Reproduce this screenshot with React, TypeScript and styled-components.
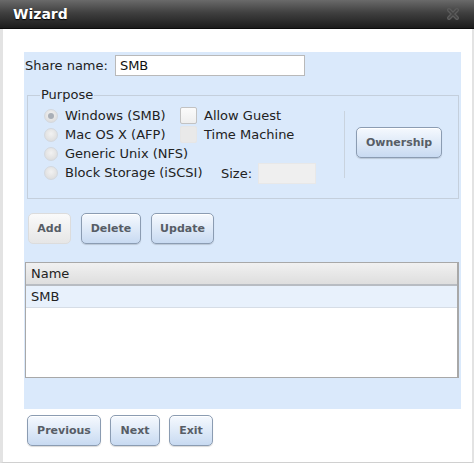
import styled, { createGlobalStyle } from 'styled-components';

const Global = createGlobalStyle`
  html, body {
    margin: 0;
    padding: 0;
    background: #ffffff;
  }
  body {
    font-family: "DejaVu Sans", Verdana, sans-serif;
  }
`;

const Window = styled.div`
  width: 474px;
  height: 463px;
  box-sizing: border-box;
  display: flex;
  flex-direction: column;
  background: #fff;
  overflow: hidden;
`;

const TitleBar = styled.div`
  height: 29px;
  flex: none;
  box-sizing: border-box;
  display: flex;
  align-items: center;
  justify-content: space-between;
  padding: 0 14px 1px 13px;
  background: linear-gradient(#6a6a6a 0%, #404040 45%, #1c1c1c 100%);
  border-bottom: 1px solid #0c0c0c;
`;

const Title = styled.span`
  color: #fff;
  font-weight: bold;
  font-size: 14px;
  text-shadow: 0 1px 1px #000;
`;

const Body = styled.div`
  flex: 1;
  display: flex;
  flex-direction: column;
  padding: 23px 11px 0 21px;
  border-left: 3px solid #e3e3e3;
  border-right: 2px solid #e3e3e3;
  border-bottom: 1px solid #d0d0d0;
`;

const Panel = styled.div`
  background: #dae9fb;
  display: flex;
  flex-direction: column;
  padding: 3px 2px 31px 1px;
`;

const Row = styled.div`
  display: flex;
  align-items: center;
  gap: 7px;
`;

const Label = styled.span`
  font-size: 13px;
  color: #222;
`;

const TextInput = styled.div<{ $width: number; $disabled?: boolean }>`
  width: ${(p) => p.$width}px;
  height: 21px;
  flex: none;
  box-sizing: border-box;
  border: 1px solid ${(p) => (p.$disabled ? '#e8e8e8' : '#b9b9b9')};
  background: ${(p) => (p.$disabled ? '#efefef' : '#fff')};
  font-size: 13px;
  color: #111;
  padding: 2px 4px;
  line-height: 15px;
`;

const Fieldset = styled.fieldset`
  margin: 12px 0 0 2px;
  padding: 0 13px 16px 16px;
  border: 1px solid #c4cfdc;
  display: flex;
  align-items: center;
  min-width: 0;
`;

const Legend = styled.legend`
  font-size: 13px;
  color: #222;
  padding: 0 1px;
  margin-left: -4px;
  line-height: 14px;
`;

const Options = styled.div`
  display: grid;
  grid-template-columns: 136px auto;
  grid-auto-rows: 19px;
  align-items: center;
  margin-top: 4px;
`;

const Option = styled.label`
  display: flex;
  align-items: center;
  gap: 7px;
  font-size: 13px;
  color: #222;
  white-space: nowrap;
`;

const Radio = styled.span<{ $checked?: boolean }>`
  width: 14px;
  height: 14px;
  flex: none;
  border-radius: 50%;
  box-sizing: border-box;
  border: 1px solid #d3d8de;
  background: radial-gradient(circle at 50% 40%, #f2f2f2, #d8d8d8);
  display: flex;
  align-items: center;
  justify-content: center;
  &::after {
    content: '';
    display: ${(p) => (p.$checked ? 'block' : 'none')};
    width: 6px;
    height: 6px;
    border-radius: 50%;
    background: #a9afb7;
  }
`;

const Checkbox = styled.span<{ $disabled?: boolean }>`
  width: 17px;
  height: 17px;
  flex: none;
  box-sizing: border-box;
  border: 1px solid ${(p) => (p.$disabled ? '#e6e6e6' : '#c2c2c2')};
  background: ${(p) => (p.$disabled ? '#e9e9e9' : 'linear-gradient(#fbfbfb, #eeeeee)')};
  border-radius: 2px;
`;

const SizeCell = styled.div`
  display: flex;
  align-items: center;
  gap: 6px;
  margin-left: 41px;
  margin-top: 1px;
`;

const Divider = styled.div`
  width: 1px;
  align-self: stretch;
  background: #c9d3de;
  margin: 9px 11px 4px 28px;
`;

const Button = styled.button<{ $plain?: boolean; $w: number }>`
  width: ${(p) => p.$w}px;
  height: 31px;
  flex: none;
  box-sizing: border-box;
  font-family: "DejaVu Sans", Verdana, sans-serif;
  font-weight: bold;
  font-size: 11px;
  color: #575d66;
  border-radius: 5px;
  border: 1px solid ${(p) => (p.$plain ? '#dcdcdc' : '#8b9cb2')};
  background: ${(p) =>
    p.$plain ? 'linear-gradient(#fafafa, #e6e6e6)' : 'linear-gradient(#f5f9fe 0%, #dfeaf8 50%, #c8daf1 100%)'};
  box-shadow: ${(p) => (p.$plain ? 'none' : 'inset 0 1px 0 #fff, 0 1px 1px rgba(0,0,0,0.15)')};
  padding: 0;
  cursor: pointer;
`;

const ButtonRow = styled.div`
  display: flex;
  gap: 10px;
  margin: 14px 0 0 3px;
`;

const Table = styled.div`
  margin-top: 18px;
  height: 116px;
  box-sizing: border-box;
  border: 1px solid #a8a8a8;
  border-right-width: 2px;
  background: #fff;
  display: flex;
  flex-direction: column;
`;

const HeadCell = styled.div`
  height: 23px;
  box-sizing: border-box;
  padding: 0 5px;
  display: flex;
  align-items: center;
  font-size: 13px;
  color: #222;
  background: linear-gradient(#f1f1f1, #dedede);
  border-bottom: 2px solid #b8bcc2;
`;

const Cell = styled.div`
  height: 22px;
  box-sizing: border-box;
  padding: 0 5px;
  display: flex;
  align-items: center;
  font-size: 13px;
  color: #222;
  background: #e8f1fc;
  border-bottom: 1px solid #d6dde6;
`;

const Footer = styled.div`
  display: flex;
  gap: 9px;
  margin: 6px 0 0 3px;
`;

const CloseIcon = () => (
  <svg width="14" height="14" viewBox="0 0 14 14">
    <path d="M3 3 L11 11 M11 3 L3 11" stroke="#5c5c5c" strokeWidth="4" strokeLinecap="round" />
    <path d="M3 3 L11 11 M11 3 L3 11" stroke="#444" strokeWidth="1.5" strokeLinecap="round" />
  </svg>
);

export default function App() {
  return (
    <>
      <Global />
      <Window>
        <TitleBar>
          <Title>Wizard</Title>
          <CloseIcon />
        </TitleBar>
        <Body>
          <Panel>
            <Row>
              <Label>Share name:</Label>
              <TextInput $width={190}>SMB</TextInput>
            </Row>
            <Fieldset>
              <Legend>Purpose</Legend>
              <Options>
                <Option>
                  <Radio $checked />
                  Windows (SMB)
                </Option>
                <Option>
                  <Checkbox />
                  Allow Guest
                </Option>
                <Option>
                  <Radio />
                  Mac OS X (AFP)
                </Option>
                <Option>
                  <Checkbox $disabled />
                  Time Machine
                </Option>
                <Option>
                  <Radio />
                  Generic Unix (NFS)
                </Option>
                <span />
                <Option>
                  <Radio />
                  Block Storage (iSCSI)
                </Option>
                <SizeCell>
                  <Label>Size:</Label>
                  <TextInput $width={58} $disabled />
                </SizeCell>
              </Options>
              <Divider />
              <Button $w={86}>Ownership</Button>
            </Fieldset>
            <ButtonRow>
              <Button $plain $w={43}>Add</Button>
              <Button $w={60}>Delete</Button>
              <Button $w={63}>Update</Button>
            </ButtonRow>
            <Table>
              <HeadCell>Name</HeadCell>
              <Cell>SMB</Cell>
            </Table>
          </Panel>
          <Footer>
            <Button $w={74}>Previous</Button>
            <Button $w={50}>Next</Button>
            <Button $w={44}>Exit</Button>
          </Footer>
        </Body>
      </Window>
    </>
  );
}
